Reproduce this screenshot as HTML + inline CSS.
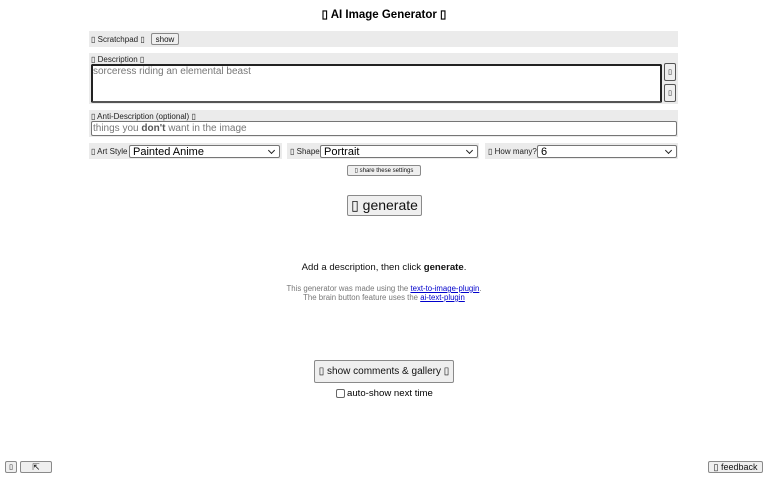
<!DOCTYPE html>
<html><head><meta charset="utf-8"><style>
*{box-sizing:border-box;margin:0;padding:0}
body{width:768px;height:480px;position:relative;background:#fff;font-family:"Liberation Sans",sans-serif;color:#000;overflow:hidden}
.a{position:absolute}
.bar{position:absolute;background:#ebebeb}
.t{position:absolute;font-size:8px;white-space:nowrap;color:#222}
.btn{position:absolute;background:#efefef;border:1px solid #8a8a8a;border-radius:2px;display:flex;align-items:center;justify-content:center;white-space:nowrap;color:#111}
.in{position:absolute;background:#fff;border:1px solid #767676;border-radius:2px}
.sel{position:absolute;background:#fff;border:1px solid #767676;border-radius:2px;font-size:11px;padding-left:3px;line-height:11px;padding-top:1px;display:block;overflow:hidden}
.sel:after{content:"";position:absolute;right:5px;top:2px;width:4px;height:4px;border-right:1.5px solid #222;border-bottom:1.5px solid #222;transform:rotate(45deg)}
.c{position:absolute;left:0;width:768px;text-align:center;white-space:nowrap}
</style></head><body>
<div class="c" style="top:7px;font-size:11.5px;font-weight:bold">▯ AI Image Generator ▯</div>

<div class="bar" style="left:89px;top:31px;width:589px;height:16px"></div>
<div class="t" style="left:91px;top:35px">▯ Scratchpad ▯</div>
<div class="btn" style="left:151px;top:33px;width:28px;height:12px;font-size:8px">show</div>

<div class="bar" style="left:89px;top:53px;width:589px;height:51px"></div>
<div class="t" style="left:91px;top:55px">▯ Description ▯</div>
<div class="in" style="left:91px;top:64px;width:571px;height:39px;border:2px solid #222;border-bottom-color:#555"></div>
<div class="t" style="left:93px;top:66px;font-size:10px;color:#777">sorceress riding an elemental beast</div>
<div class="btn" style="left:664px;top:63px;width:12px;height:18px;font-size:7px;border-color:#555">▯</div>
<div class="btn" style="left:664px;top:84px;width:12px;height:18px;font-size:7px;border-color:#555">▯</div>

<div class="bar" style="left:89px;top:110px;width:589px;height:27px"></div>
<div class="t" style="left:91px;top:112px">▯ Anti-Description (optional) ▯</div>
<div class="in" style="left:91px;top:121px;width:586px;height:15px"></div>
<div class="t" style="left:93px;top:123px;font-size:10px;color:#777">things you <b style="color:#555">don't</b> want in the image</div>

<div class="bar" style="left:89px;top:143px;width:193px;height:16px"></div>
<div class="t" style="left:91px;top:147px">▯ Art Style</div>
<div class="sel" style="left:129px;top:145px;width:151px;height:13px">Painted Anime</div>
<div class="bar" style="left:287px;top:143px;width:192px;height:16px"></div>
<div class="t" style="left:290px;top:147px">▯ Shape</div>
<div class="sel" style="left:320px;top:145px;width:158px;height:13px">Portrait</div>
<div class="bar" style="left:485px;top:143px;width:193px;height:16px"></div>
<div class="t" style="left:488px;top:147px">▯ How many?</div>
<div class="sel" style="left:537px;top:145px;width:140px;height:13px">6</div>

<div class="btn" style="left:347px;top:165px;width:74px;height:11px;font-size:6px">▯ share these settings</div>
<div class="btn" style="left:347px;top:195px;width:75px;height:21px;font-size:14px">▯ generate</div>

<div class="c" style="top:262px;font-size:9.6px;color:#111">Add a description, then click <b>generate</b>.</div>
<div class="c" style="top:284px;font-size:7.8px;color:#777">This generator was made using the <u style="color:#00c">text-to-image-plugin</u>.</div>
<div class="c" style="top:293px;font-size:7.8px;color:#777">The brain button feature uses the <u style="color:#00c">ai-text-plugin</u></div>

<div class="btn" style="left:314px;top:360px;width:140px;height:23px;font-size:10px">▯ show comments &amp; gallery ▯</div>
<div class="a" style="left:336px;top:389px;width:9px;height:9px;border:1px solid #666;border-radius:2px;background:#fff"></div>
<div class="a" style="left:347px;top:388px;font-size:9.6px;white-space:nowrap">auto-show next time</div>

<div class="btn" style="left:5px;top:461px;width:12px;height:12px;font-size:7px">▯</div>
<div class="btn" style="left:20px;top:461px;width:32px;height:12px;font-size:9px">⇱</div>
<div class="btn" style="left:708px;top:461px;width:55px;height:12px;font-size:9px">▯ feedback</div>
</body></html>
